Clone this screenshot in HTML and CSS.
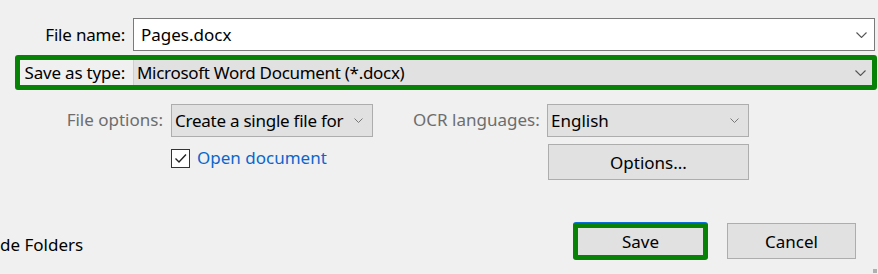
FILE: index.html
```html
<!DOCTYPE html>
<html>
<head>
<meta charset="utf-8">
<link rel="stylesheet" href="styles.css">
</head>
<body>
<div class="dialog">
  <div class="row-file">
    <label class="label">File name:</label>
    <div class="field field-white">
      <span class="value">Pages.docx</span>
      <svg class="chev" width="11" height="6" viewBox="0 0 11 6"><polyline points="0.5,0.5 5.5,5.5 10.5,0.5" fill="none" stroke="#555" stroke-width="1.1"/></svg>
    </div>
  </div>
  <div class="type-box">
    <label class="label label-type">Save as type:</label>
    <div class="field field-gray">
      <span class="value value-type">Microsoft Word Document (*.docx)</span>
      <svg class="chev" width="11" height="6" viewBox="0 0 11 6"><polyline points="0.5,0.5 5.5,5.5 10.5,0.5" fill="none" stroke="#555" stroke-width="1.1"/></svg>
    </div>
  </div>
  <div class="options">
    <span class="opt-label opt-label-right">File options:</span>
    <div class="combo">
      <span class="value value-tight">Create a single file for</span>
      <svg class="chev chev-sm" width="9" height="5" viewBox="0 0 9 5"><polyline points="0.5,0.5 4.5,4.5 8.5,0.5" fill="none" stroke="#777" stroke-width="1"/></svg>
    </div>
    <span class="opt-label">OCR languages:</span>
    <div class="combo">
      <span class="value">English</span>
      <svg class="chev chev-sm" width="9" height="5" viewBox="0 0 9 5"><polyline points="0.5,0.5 4.5,4.5 8.5,0.5" fill="none" stroke="#777" stroke-width="1"/></svg>
    </div>
    <span></span>
    <div class="check-row">
      <span class="checkbox"><svg width="17" height="17" viewBox="0 0 17 17"><polyline points="3.5,8.5 7,12 14,4.5" fill="none" stroke="#222" stroke-width="1.4"/></svg></span>
      <span class="link">Open document</span>
    </div>
    <span></span>
    <button class="btn btn-options">Options...</button>
  </div>
  <div class="bottom">
    <span class="folders">de Folders</span>
    <button class="btn btn-save">Save</button>
    <button class="btn btn-cancel">Cancel</button>
  </div>
  <div class="grip"></div>
</div>
</body>
</html>
```
FILE: styles.css
```css
html, body {
  margin: 0;
  padding: 0;
  background: #f0f0f0;
}
body {
  font-family: "Noto Sans", "Open Sans", sans-serif;
  font-size: 17px;
  color: #000;
  width: 878px;
  height: 274px;
  overflow: hidden;
}
.dialog {
  position: relative;
  padding-top: 18px;
  height: 256px;
}
.row-file {
  display: flex;
  align-items: center;
  height: 33px;
  margin-right: 3px;
}
.label {
  padding-right: 8px;
  text-align: right;
  flex: none;
  box-sizing: border-box;
  width: 133px;
  white-space: nowrap;
  letter-spacing: -0.2px;
}
.field {
  flex: 1;
  display: flex;
  align-items: center;
  height: 100%;
  box-sizing: border-box;
  padding: 0 7px 0 7px;
}
.field .value { flex: 1; }
.value-type { letter-spacing: -0.3px; }
.value-tight { letter-spacing: -0.25px; }
.field-white {
  background: #fff;
  border: 1px solid #7a7a7a;
}
.type-box {
  display: flex;
  align-items: center;
  margin: 4px 1px 0 15px;
  height: 35px;
  box-sizing: border-box;
  border: 5px solid #078207;
  border-radius: 3px;
}
.label-type {
  width: 113px;
  padding-right: 8px;
}
.field-gray {
  background: #e1e1e1;
  border-left: 1px solid #cfcfcf;
  padding: 0 6px 0 3px;
}
.chev { flex: none; }
.options {
  display: grid;
  grid-template-columns: 171px 242px 134px 202px;
  grid-template-rows: 33px 36px;
  row-gap: 7px;
  margin-top: 14px;
  align-items: center;
}
.opt-label {
  color: #6d6d6d;
  margin-top: -3px;
  white-space: nowrap;
}
.opt-label-right {
  text-align: right;
  padding-right: 8px;
}
.combo {
  width: 202px;
  height: 33px;
  box-sizing: border-box;
  background: #e1e1e1;
  border: 1px solid #adadad;
  display: flex;
  align-items: center;
  padding: 0 9px 0 3px;
}
.combo .value { flex: 1; white-space: nowrap; overflow: hidden; }
.check-row {
  display: flex;
  align-items: center;
  align-self: start;
  margin-top: 4px;
  gap: 7px;
}
.checkbox {
  width: 19px;
  height: 19px;
  box-sizing: border-box;
  border: 1px solid #333;
  background: #fff;
  display: flex;
  align-items: center;
  justify-content: center;
}
.link {
  color: #0b66cc;
  margin-top: -2px;
}
.btn {
  font-family: inherit;
  font-size: 17px;
  color: #000;
  background: #e1e1e1;
  border: 1px solid #adadad;
  padding: 0;
  box-sizing: border-box;
}
.btn-options {
  width: 201px;
  height: 36px;
  margin-left: 1px;
}
.bottom {
  display: flex;
  align-items: center;
  margin-top: 43px;
  height: 37px;
}
.folders {
  flex: 1;
  margin-top: 5px;
}
.btn-save {
  width: 135px;
  height: 37px;
  border: 5px solid #078207;
  border-radius: 3px;
  box-shadow: 0 -1px 0 #0a6fd8;
}
.btn-cancel {
  width: 129px;
  height: 36px;
  margin-left: 19px;
  margin-right: 22px;
  align-self: flex-start;
}
.grip {
  position: absolute;
  right: 1px;
  bottom: 1px;
  width: 4px;
  height: 4px;
  background: radial-gradient(circle, #b0b0b0 1px, transparent 1px) 0 0 / 2px 2px;
}
```
